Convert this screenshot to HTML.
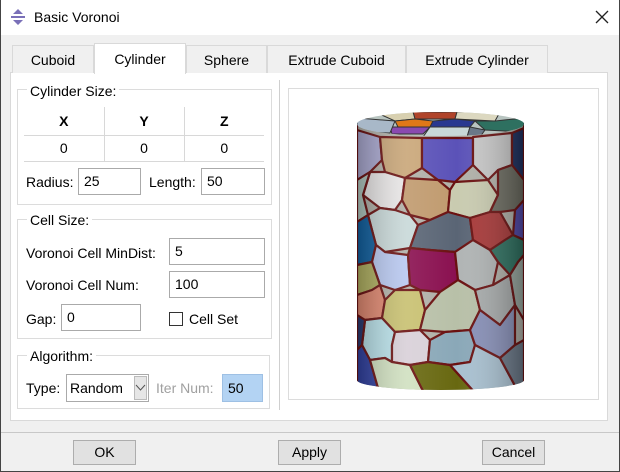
<!DOCTYPE html>
<html><head><style>
*{box-sizing:border-box;margin:0;padding:0}
body{width:620px;height:472px;background:#f0f0f0;font-family:"Liberation Sans","Noto Sans CJK SC",sans-serif;font-size:13px;color:#000;position:relative;overflow:hidden}
.a{position:absolute}
.win{left:0;top:0;width:620px;height:472px;border:1px solid #444;border-top:none}
.title{left:1px;top:0;width:618px;height:35px;background:#fff}
.tab{position:absolute;top:45px;height:28px;border:1px solid #d9d9d9;border-bottom:none;background:#f0f0f0;text-align:center;line-height:28px;font-size:14px}
.pane{left:10px;top:72px;width:598px;height:349px;background:#fff;border:1px solid #d9d9d9}
.grp{position:absolute;border:1px solid #dcdcdc}
.lg{position:absolute;background:#fff;padding:0 3px;font-size:14px;line-height:16px}
.in{position:absolute;border:1px solid #aaa;background:#fff;padding-left:5px;font-size:14px;line-height:25px}
.lb{position:absolute;font-size:14px;line-height:16px}
.btn{position:absolute;top:440px;width:63px;height:25px;border:1px solid #adadad;background:#e1e1e1;text-align:center;line-height:23px;font-size:14px}
table{border-collapse:collapse;position:absolute;left:24px;top:107px}
td{width:80px;text-align:center;border:1px solid #d8d8d8;font-size:14px}
</style></head><body>
<div class="a win"></div>
<div class="a title"></div>
<svg class="a" style="left:9px;top:8px" width="18" height="18" viewBox="0 0 18 18"><path d="M9 1 L14 6 H4Z M2 8 H16 V10 H2Z M4 12 H14 L9 17Z" fill="#7a70b8"/></svg>
<div class="a" style="left:34px;top:9px;font-size:14px">Basic Voronoi</div>
<svg class="a" style="left:595px;top:10px" width="14" height="14"><path d="M1 1L13 13M13 1L1 13" stroke="#222" stroke-width="1.3"/></svg>
<div class="a pane"></div>
<div class="tab" style="left:12px;width:82px">Cuboid</div>
<div class="tab" style="left:94px;width:92px;top:43px;height:31px;background:#fff;line-height:30px">Cylinder</div>
<div class="tab" style="left:186px;width:81px">Sphere</div>
<div class="tab" style="left:267px;width:139px">Extrude Cuboid</div>
<div class="tab" style="left:406px;width:142px">Extrude Cylinder</div>

<div class="grp" style="left:17px;top:89px;width:255px;height:116px"></div>
<div class="lg" style="left:27px;top:83px">Cylinder Size:</div>
<table><tr style="height:28px"><td style="border-top:none;border-left:none"><b>X</b></td><td style="border-top:none"><b>Y</b></td><td style="border-top:none;border-right:none"><b>Z</b></td></tr>
<tr style="height:26px"><td style="border-left:none">0</td><td>0</td><td style="border-right:none">0</td></tr></table>
<div class="lb" style="left:26px;top:174px">Radius:</div>
<div class="in" style="left:78px;top:168px;width:63px;height:27px">25</div>
<div class="lb" style="left:149px;top:174px">Length:</div>
<div class="in" style="left:201px;top:168px;width:64px;height:27px">50</div>

<div class="grp" style="left:17px;top:219px;width:255px;height:120px"></div>
<div class="lg" style="left:27px;top:212px">Cell Size:</div>
<div class="lb" style="left:26px;top:245px">Voronoi Cell MinDist:</div>
<div class="in" style="left:169px;top:238px;width:96px;height:27px">5</div>
<div class="lb" style="left:26px;top:277px">Voronoi Cell Num:</div>
<div class="in" style="left:169px;top:271px;width:96px;height:27px">100</div>
<div class="lb" style="left:26px;top:311px">Gap:</div>
<div class="in" style="left:61px;top:304px;width:80px;height:27px">0</div>
<div class="a" style="left:169px;top:312px;width:14px;height:14px;border:1px solid #333;background:#fff"></div>
<div class="lb" style="left:189px;top:311px">Cell Set</div>

<div class="grp" style="left:17px;top:355px;width:253px;height:54px"></div>
<div class="lg" style="left:27px;top:348px">Algorithm:</div>
<div class="lb" style="left:26px;top:380px">Type:</div>
<div class="a" style="left:66px;top:374px;width:83px;height:28px;border:1px solid #aaa;background:#fff;font-size:14px;line-height:26px;padding-left:3px">Random</div>
<div class="a" style="left:134px;top:376px;width:13px;height:24px;background:#e6e6e6;border:1px solid #bbb"></div>
<svg class="a" style="left:135px;top:384px" width="11" height="8"><path d="M1 1L5.5 6L10 1" stroke="#555" fill="none"/></svg>
<div class="lb" style="left:156px;top:380px;color:#a0a0a0">Iter Num:</div>
<div class="a" style="left:222px;top:374px;width:41px;height:28px;background:#b3d3f3;border:1px solid #9ec0e4;font-size:14px;line-height:26px;padding-left:5px">50</div>

<div class="a" style="left:279px;top:80px;width:1px;height:330px;background:#cfcfcf"></div>
<div class="a" style="left:288px;top:88px;width:311px;height:312px;border:1px solid #dcdcdc;background:#fff"></div>

<svg class="a" style="left:0;top:0" width="620" height="472">
<defs><clipPath id="cy"><rect x="357" y="124" width="167" height="256"/><ellipse cx="440.5" cy="380" rx="83.5" ry="10"/></clipPath>
<clipPath id="tp"><ellipse cx="440.5" cy="124" rx="83.5" ry="12"/></clipPath>
<linearGradient id="sh" x1="0" x2="1"><stop offset="0" stop-color="#000" stop-opacity=".25"/><stop offset=".3" stop-color="#fff" stop-opacity=".1"/><stop offset=".6" stop-color="#fff" stop-opacity="0"/><stop offset="1" stop-color="#000" stop-opacity=".3"/></linearGradient></defs>
<g clip-path="url(#cy)" stroke="#6a1010" stroke-width="2.2" stroke-linejoin="round">
<rect x="357" y="112" width="167" height="280" fill="#b0b0a8"/>
<polygon fill="#a9a8d0" points="357,130 380,137 382,160 370,172 357,180"/>
<polygon fill="#c9a678" points="380,137 422,138 422,168 405,178 385,172 382,160"/>
<polygon fill="#5b52b8" points="422,138 473,138 473,165 455,182 438,180 422,168"/>
<polygon fill="#c8c8c8" points="473,137 512,133 512,165 498,170 488,180 473,165"/>
<polygon fill="#1e3060" points="512,133 524,128 524,190 512,165"/>
<polygon fill="#e8e6e6" points="370,172 385,172 405,178 402,200 395,210 380,208 363,195"/>
<polygon fill="#c09a6e" points="405,178 438,180 450,190 448,212 430,220 410,215 402,200"/>
<polygon fill="#c9cbb0" points="450,190 455,182 488,180 498,195 490,212 470,218 448,212"/>
<polygon fill="#6b6b60" points="498,170 512,165 524,180 524,205 515,210 500,212 490,212 498,195"/>
<polygon fill="#b0c8c0" points="357,180 370,172 363,195 368,215 357,222"/>
<polygon fill="#c8d8d8" points="368,215 380,208 395,210 410,215 418,225 410,248 385,252 376,245"/>
<polygon fill="#5a6575" points="418,225 430,220 448,212 470,218 473,240 455,252 430,250 410,248"/>
<polygon fill="#a83838" points="470,218 490,212 500,212 513,235 505,240 490,250 473,240"/>
<polygon fill="#5048a8" points="515,210 524,200 524,240 513,235"/>
<polygon fill="#1060a0" points="357,222 368,215 376,245 372,262 357,265"/>
<polygon fill="#b8c8f0" points="376,245 385,252 408,255 410,285 395,290 380,285 372,262"/>
<polygon fill="#8a1050" points="410,248 430,250 455,252 458,280 440,292 420,290 410,285 408,255"/>
<polygon fill="#b0b4b4" points="455,252 473,240 490,250 498,262 493,285 475,290 458,280"/>
<polygon fill="#2e7060" points="490,250 505,240 513,235 524,240 524,255 518,262 510,275 498,262"/>
<polygon fill="#b0b060" points="357,265 372,262 380,285 372,290 357,295"/>
<polygon fill="#e08870" points="357,295 372,290 380,285 385,300 382,318 365,320 357,315"/>
<polygon fill="#c8c070" points="385,300 395,290 420,290 425,310 420,330 395,332 382,318"/>
<polygon fill="#b8c0a8" points="425,310 440,292 458,280 475,290 480,310 470,330 445,332 420,330"/>
<polygon fill="#a8acac" points="475,290 493,285 510,275 515,305 500,325 480,310"/>
<polygon fill="#9aa8a0" points="510,275 518,262 524,255 524,320 515,305"/>
<polygon fill="#b8e0e8" points="365,320 382,318 395,332 392,345 392,362 385,358 370,360 362,345"/>
<polygon fill="#d8d0d8" points="395,332 420,330 430,340 428,362 410,365 392,362 392,345"/>
<polygon fill="#8aa8b8" points="430,340 445,332 470,330 475,345 470,362 450,365 428,362"/>
<polygon fill="#8890b8" points="470,330 480,310 500,325 515,305 515,345 500,358 475,345"/>
<polygon fill="#283870" points="357,315 365,320 362,345 357,350"/>
<polygon fill="#3040a0" points="357,350 362,345 370,360 380,395 357,395"/>
<polygon fill="#d0e0c0" points="370,360 385,358 392,362 410,365 425,395 380,395"/>
<polygon fill="#686810" points="410,365 428,362 450,365 477,395 425,395"/>
<polygon fill="#a8c0d0" points="450,365 470,362 475,345 500,358 520,395 477,395"/>
<polygon fill="#6a7888" points="500,358 515,345 524,340 524,395 520,395"/>
<rect x="357" y="112" width="167" height="280" fill="url(#sh)" stroke="none"/>
</g>
<g clip-path="url(#tp)" stroke="#333" stroke-width="1">
<rect x="357" y="110" width="167" height="30" fill="#b8c4c0"/>
<polygon fill="#b0442a" points="413,112 457,112 455,119 415,119"/>
<polygon fill="#dcd8c0" points="457,112 500,112 495,121 455,119"/>
<polygon fill="#d8d0b0" points="375,112 413,112 415,119 395,121"/>
<polygon fill="#e07818" points="395,121 415,119 433,121 430,127 398,127"/>
<polygon fill="#283890" points="433,121 455,119 475,121 470,127 430,127"/>
<polygon fill="#2e7060" points="475,121 495,121 524,118 524,132 485,130"/>
<polygon fill="#8a4ab0" points="390,127 430,127 423,134 392,134"/>
<polygon fill="#c8d8d8" points="430,127 470,127 467,137 423,137"/>
<polygon fill="#a8b8c8" points="357,118 395,121 390,133 357,132"/>
<polygon fill="#6a7888" points="470,127 485,130 480,137 467,137"/>
</g>
</svg>

<div class="a" style="left:1px;top:432px;width:618px;height:1px;background:#c8c8c8"></div>
<div class="btn" style="left:73px">OK</div>
<div class="btn" style="left:278px">Apply</div>
<div class="btn" style="left:482px">Cancel</div>
</body></html>
